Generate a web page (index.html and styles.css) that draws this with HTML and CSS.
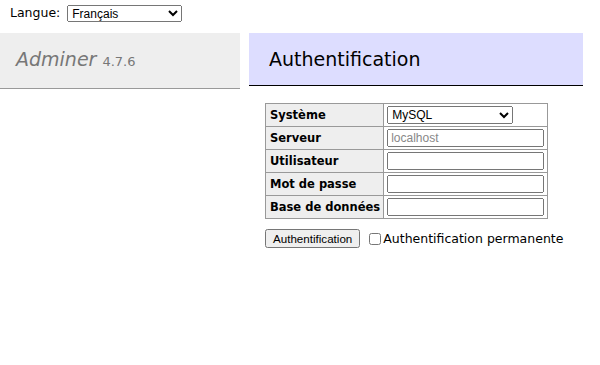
FILE: index.html
```html
<!DOCTYPE html>
<html>

<head>
    <title>Authentification - Adminer</title>
    <link rel="stylesheet" href="styles.css">
</head>

<body>
    <form class="lang">
        <label>Langue: <select class="langSelect">
            <option>Français</option>
        </select></label>
    </form>

    <div class="layout">
        <div class="menu">
            <h1><span class="brand">Adminer</span> <span class="version">4.7.6</span></h1>
        </div>

        <div class="content">
            <h2>Authentification</h2>
            <form class="login">
                <table class="loginTable">
                    <tr>
                        <th>Système</th>
                        <td>
                            <select class="driver">
                                <option>MySQL</option>
                            </select>
                        </td>
                    </tr>
                    <tr>
                        <th>Serveur</th>
                        <td><input class="field" type="text" placeholder="localhost"></td>
                    </tr>
                    <tr>
                        <th>Utilisateur</th>
                        <td><input class="field" type="text"></td>
                    </tr>
                    <tr>
                        <th>Mot de passe</th>
                        <td><input class="field" type="password"></td>
                    </tr>
                    <tr>
                        <th>Base de données</th>
                        <td><input class="field" type="text"></td>
                    </tr>
                </table>
                <p class="actions">
                    <input class="submitBtn" type="submit" value="Authentification">
                    <label class="permanent"><input type="checkbox">Authentification permanente</label>
                </p>
            </form>
        </div>
    </div>
</body>

</html>
```

FILE: styles.css
```css
body {
    margin: 0;
    color: #000;
    background: #fff;
    font-family: "DejaVu Sans", Verdana, sans-serif;
    font-size: 12.5px;
    line-height: 1.25;
}

.lang {
    margin: 0;
    height: 33px;
    box-sizing: border-box;
    padding: 5px 10px 0;
}

.langSelect {
    width: 115px;
    height: 17px;
    margin-left: 3px;
    font-family: "Liberation Sans", Arial, sans-serif;
    font-size: 12px;
    vertical-align: top;
}

.layout {
    display: flex;
}

.menu {
    width: 240px;
}

h1 {
    margin: 0;
    padding: 14px 16px;
    font-size: 19px;
    line-height: 24px;
    font-weight: normal;
    color: #777;
    background: #eee;
    border-bottom: 1px solid #999;
}

.brand {
    font-style: italic;
}

.version {
    font-size: 13px;
}

.content {
    margin-left: 9px;
    width: 334px;
}

h2 {
    margin: 0;
    padding: 14px 20px;
    font-size: 19px;
    line-height: 24px;
    font-weight: normal;
    background: #ddf;
    border-bottom: 1px solid #000;
}

.login {
    margin: 17px 0 0 16px;
}

.loginTable {
    border-collapse: collapse;
    border: 1px solid #999;
    font-size: inherit;
}

.loginTable th,
.loginTable td {
    border: 1px solid #999;
    padding: 2px 3px;
    height: 18px;
}

.loginTable th {
    background: #eee;
    text-align: left;
    padding-left: 4px;
    font-size: 11.5px;
    white-space: nowrap;
}

.driver {
    width: 126px;
    height: 18px;
    font-family: "Liberation Sans", Arial, sans-serif;
    font-size: 12px;
    display: block;
}

.field {
    width: 157px;
    height: 18px;
    box-sizing: border-box;
    font-family: "Liberation Sans", Arial, sans-serif;
    font-size: 12px;
    display: block;
}

.field::placeholder {
    color: #888;
}

.actions {
    margin: 10px 0 0;
    display: flex;
    align-items: center;
}

.submitBtn {
    font-family: "Liberation Sans", Arial, sans-serif;
    font-size: 11.6px;
    height: 19px;
    padding: 0 6px;
    margin: 0;
}

.permanent {
    display: flex;
    align-items: center;
    margin-left: 9px;
}

.permanent input {
    margin: 0 2px 0 0;
    width: 12px;
    height: 12px;
}
```
